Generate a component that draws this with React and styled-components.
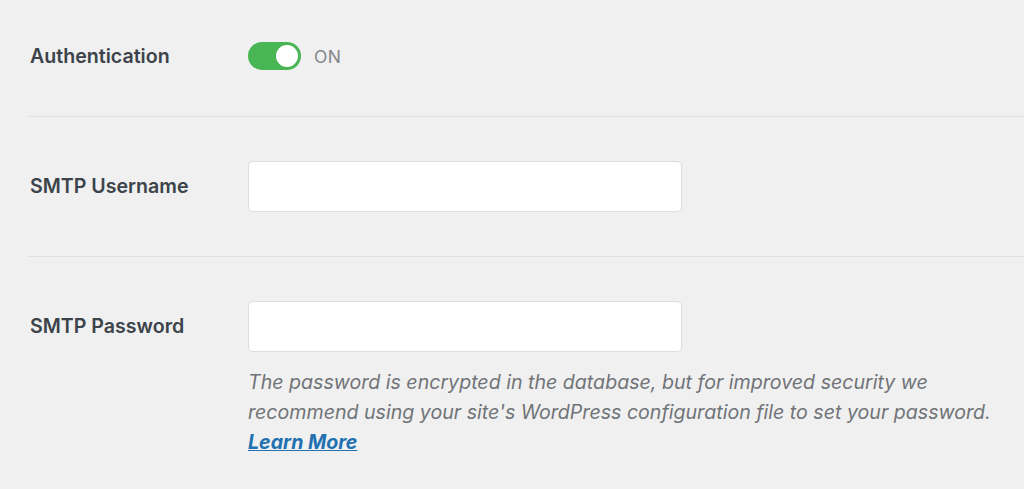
import React from "react";
import styled, { createGlobalStyle } from "styled-components";

const Global = createGlobalStyle`
  html, body { margin: 0; padding: 0; background: #f0f0f0; }
  body { font-family: Inter, "Noto Sans", "Liberation Sans", sans-serif; }
  * { box-sizing: border-box; }
`;

const Page = styled.div`
  width: 1024px;
  height: 489px;
  overflow: hidden;
  padding-left: 28px;
  background: #f0f0f0;
`;

const Row = styled.div`
  display: grid;
  grid-template-columns: 220px 1fr;
  align-items: start;
  padding: ${(p) => p.$pad};
  border-bottom: ${(p) => (p.$last ? "none" : "1px solid #e0e0e0")};
`;

const Label = styled.div`
  padding-left: 2px;
  font-size: 19.6px;
  font-weight: 600;
  color: #3c434a;
  line-height: ${(p) => p.$lh}px;
  white-space: nowrap;
`;

const Field = styled.div`
  display: flex;
  flex-direction: column;
`;

const ToggleWrap = styled.div`
  display: flex;
  align-items: center;
  gap: 13px;
  height: 28px;
`;

const Switch = styled.div`
  width: 53px;
  height: 28px;
  border-radius: 14px;
  background: #49b654;
  position: relative;
`;

const Knob = styled.span`
  position: absolute;
  right: 3px;
  top: 3px;
  width: 22px;
  height: 22px;
  border-radius: 50%;
  background: #fff;
`;

const State = styled.span`
  font-size: 17.5px;
  color: #82868a;
  letter-spacing: 0.3px;
`;

const Input = styled.input`
  width: 434px;
  height: 51px;
  background: #fff;
  border: 1px solid #dddddd;
  border-radius: 5px;
  outline: none;
  padding: 0 12px;
  font-size: 16px;
`;

const Help = styled.p`
  margin: 15px 0 0;
  font-size: 19.6px;
  line-height: 30px;
  font-style: italic;
  color: #707478;
  white-space: nowrap;
`;

const LearnMore = styled.a`
  font-weight: 700;
  color: #2271b1;
  text-decoration: underline;
`;

export default function App() {
  return (
    <>
      <Global />
      <Page>
        <Row $pad="42px 0 46px">
          <Label $lh={28}>Authentication</Label>
          <Field>
            <ToggleWrap>
              <Switch>
                <Knob />
              </Switch>
              <State>ON</State>
            </ToggleWrap>
          </Field>
        </Row>
        <Row $pad="44px 0 44px">
          <Label $lh={51}>SMTP Username</Label>
          <Field>
            <Input type="text" />
          </Field>
        </Row>
        <Row $pad="44px 0 20px" $last>
          <Label $lh={51}>SMTP Password</Label>
          <Field>
            <Input type="password" />
            <Help>
              The password is encrypted in the database, but for improved security we
              <br />
              recommend using your site's WordPress configuration file to set your password.
              <br />
              <LearnMore href="#">Learn More</LearnMore>
            </Help>
          </Field>
        </Row>
      </Page>
    </>
  );
}
